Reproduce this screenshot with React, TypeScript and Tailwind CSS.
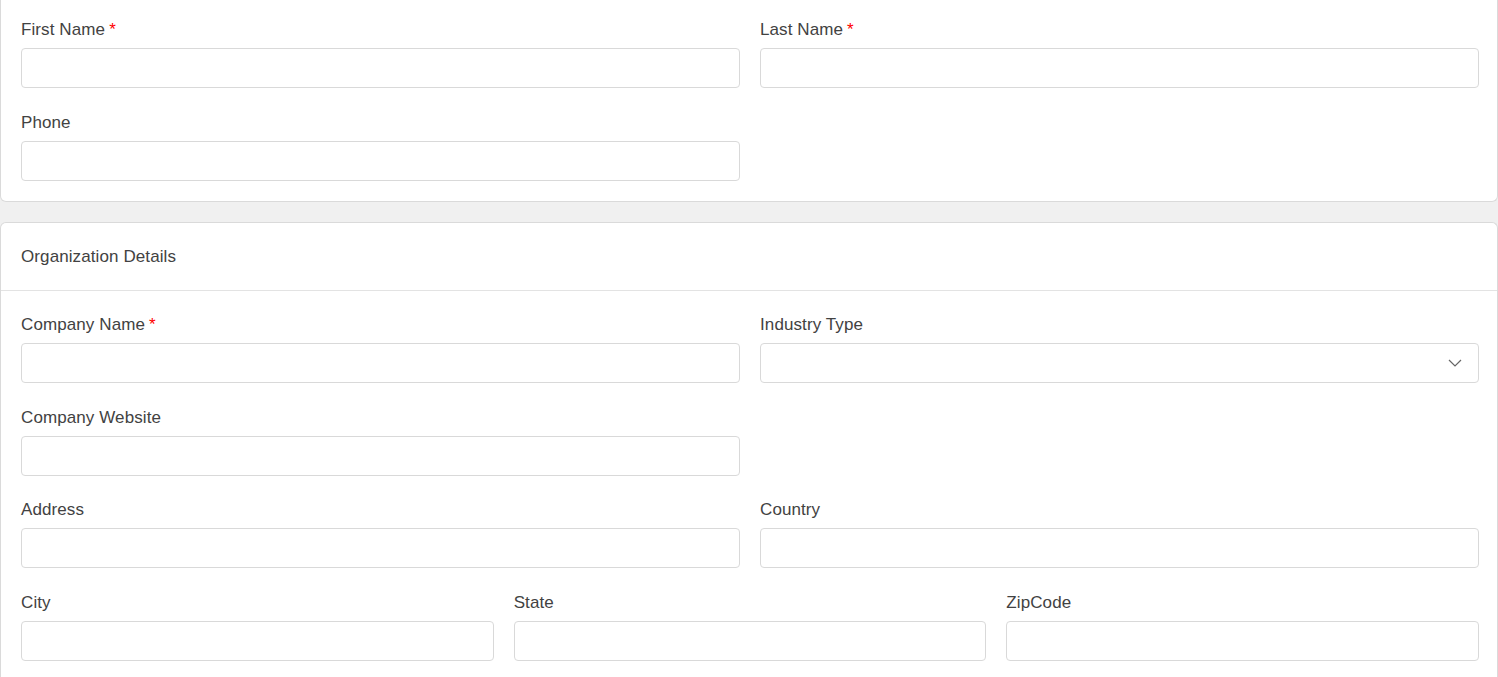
import React from "react";

function Label({ text, required }: { text: string; required?: boolean }) {
  return (
    <label className="mb-2 block text-[17px] leading-[21px] tracking-[0.1px] text-[#424242]">
      {text}
      {required && <span className="ml-1 text-[#ff0000]">*</span>}
    </label>
  );
}

function Field({ label, required }: { label: string; required?: boolean }) {
  return (
    <div className="flex flex-col">
      <Label text={label} required={required} />
      <input
        type="text"
        className="h-10 w-full rounded-[4px] border border-[#d9d9d9] bg-white px-3 text-[15px] text-[#333] outline-none"
      />
    </div>
  );
}

function SelectField({ label }: { label: string }) {
  return (
    <div className="flex flex-col">
      <Label text={label} />
      <div className="flex h-10 w-full items-center justify-end rounded-[4px] border border-[#d9d9d9] bg-white pr-[16px]">
        <svg width="14" height="8" viewBox="0 0 14 8" fill="none">
          <path d="M1 1l6 6 6-6" stroke="#666" strokeWidth="1.2" />
        </svg>
      </div>
    </div>
  );
}

export default function App() {
  return (
    <div
      className="min-h-[677px] w-full overflow-hidden bg-[#f0f0f0]"
      style={{ fontFamily: '"Liberation Sans", Arial, sans-serif' }}
    >
      {/* contact card, top cut off */}
      <div className="w-[1498px] rounded-b-[6px] border-x border-b border-[#dadada] bg-white pb-5 pl-5 pr-[18px] pt-[19px]">
        <div className="grid grid-cols-2 gap-x-5 gap-y-6">
          <Field label="First Name" required />
          <Field label="Last Name" required />
          <Field label="Phone" />
        </div>
      </div>

      <div className="mt-5 w-[1498px] rounded-t-[6px] border-x border-t border-[#dadada] bg-white">
        <div className="border-b border-[#e3e3e3] pb-[23px] pl-5 pt-[23px] text-[17px] leading-[21px] tracking-[0.1px] text-[#424242]">
          Organization Details
        </div>
        <div className="flex flex-col gap-y-[23.7px] pb-8 pl-5 pr-[18px] pt-[23px]">
          <div className="grid grid-cols-2 gap-x-5 gap-y-[23.7px]">
            <Field label="Company Name" required />
            <SelectField label="Industry Type" />
            <Field label="Company Website" />
            <div />
            <Field label="Address" />
            <Field label="Country" />
          </div>
          <div className="grid grid-cols-3 gap-x-5">
            <Field label="City" />
            <Field label="State" />
            <Field label="ZipCode" />
          </div>
        </div>
      </div>
    </div>
  );
}
